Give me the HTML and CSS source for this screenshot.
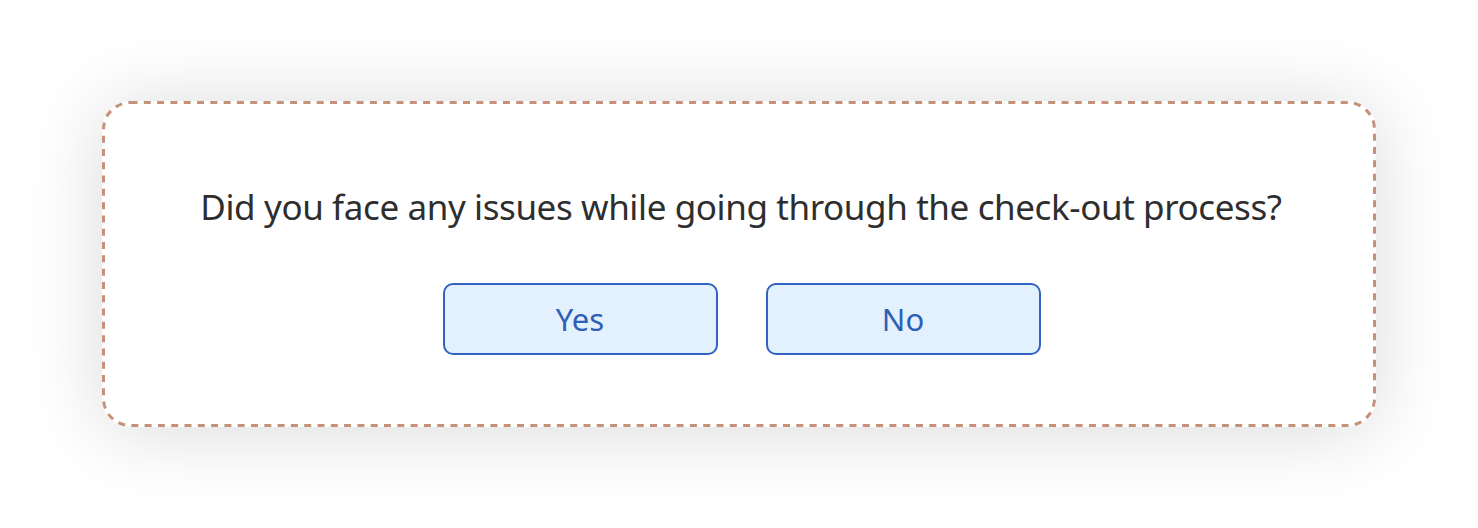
FILE: index.html
```html
<!DOCTYPE html>
<html lang="en">
<head>
<meta charset="utf-8">
<title>Survey</title>
<link rel="stylesheet" href="styles.css">
</head>
<body>
<div class="page">
  <div class="card">
    <svg class="card-outline" width="1274" height="326" viewBox="0 0 1274 326" aria-hidden="true">
      <rect x="1.5" y="1.5" width="1271" height="323" rx="27" ry="27" />
    </svg>
    <p class="question">Did you face any issues while going through the check-out process?</p>
    <div class="actions">
      <button class="btn">Yes</button>
      <button class="btn">No</button>
    </div>
  </div>
</div>
</body>
</html>
```

FILE: styles.css
```css
html, body {
  margin: 0;
  padding: 0;
  background: #ffffff;
}
.page {
  width: 1478px;
  height: 528px;
  box-sizing: border-box;
  padding: 101px 102px 101px 102px;
}
.card {
  position: relative;
  box-sizing: border-box;
  width: 1274px;
  height: 326px;
  border-radius: 28px;
  background: #ffffff;
  box-shadow: 0 4px 80px rgba(0, 0, 0, 0.15);
  display: flex;
  flex-direction: column;
  align-items: center;
  padding-top: 78px;
}
.card-outline {
  position: absolute;
  left: 0;
  top: 0;
  pointer-events: none;
}
.card-outline rect {
  fill: none;
  stroke: #c4917a;
  stroke-width: 3;
  stroke-dasharray: 7 6.3;
}
.question {
  margin: 0 0 0 4px;
  font-family: "Noto Sans", sans-serif;
  font-size: 35px;
  letter-spacing: -0.4px;
  line-height: 56px;
  color: #2e2e2e;
}
.actions {
  display: flex;
  gap: 48px;
  margin-top: 48px;
  margin-left: 5px;
}
.btn {
  box-sizing: border-box;
  width: 275px;
  height: 72px;
  border: 2px solid #3263c0;
  border-radius: 10px;
  background: #e3f0fd;
  color: #2d5fb8;
  font-family: "Noto Sans", sans-serif;
  font-size: 31px;
  padding: 0;
}
```
